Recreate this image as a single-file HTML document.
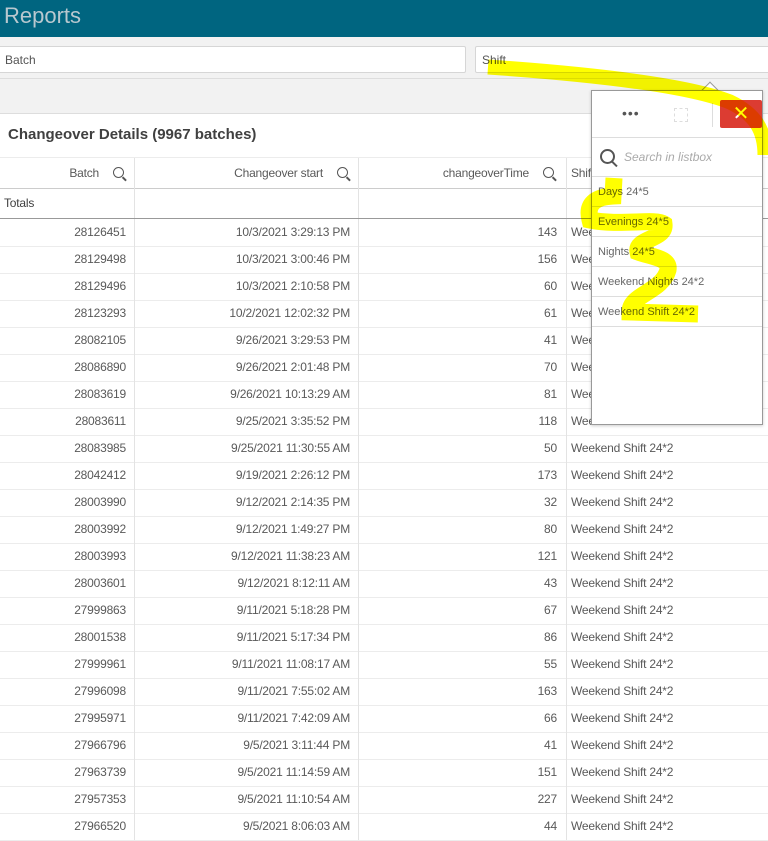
<!DOCTYPE html>
<html><head><style>
body{margin:0;width:768px;height:837px;overflow:hidden;background:#fff;font-family:"Liberation Sans",sans-serif;position:relative;color:#595959}
.a{position:absolute}
.hdr{left:0;top:0;width:768px;height:37px;background:#006580}
.hdr span{position:absolute;left:4px;top:3px;font-size:22px;color:#b8c8cf}
.gray{left:0;top:37px;width:768px;height:76px;background:#f2f2f2;border-bottom:1px solid #ddd}
.box{background:#fff;border:1px solid #d6d6d6;border-radius:2px;height:27px;font-size:12px;line-height:27px;padding-left:6px;box-sizing:border-box;color:#555}
.title{left:8px;top:126px;font-size:15px;font-weight:bold;color:#404040}
.row{position:absolute;left:0;width:768px;height:27px;border-bottom:1px solid #ececec;font-size:12px;line-height:27px;letter-spacing:-0.2px}
.c{position:absolute;top:0;height:100%;border-right:1px solid #e3e3e3;text-align:right;box-sizing:border-box}
.c1{left:0;width:135px;padding-right:8px}
.c2{left:135px;width:224px;padding-right:8px}
.c3{left:359px;width:208px;padding-right:9px}
.c4{left:567px;width:200px;text-align:left;padding-left:4px;border:none}
.mag{display:inline-block;width:9px;height:9px;border:1.5px solid #555;border-radius:50%;position:relative;margin-left:14px;vertical-align:-1px}
.mag:after{content:"";position:absolute;width:5px;height:1.5px;background:#555;left:8px;top:10px;transform:rotate(45deg)}
.pop{left:591px;top:90px;width:170px;height:333px;background:#fff;border:1px solid #999;box-shadow:0 1px 3px rgba(0,0,0,.2)}
.it{position:absolute;left:0;width:170px;height:30px;border-bottom:1px solid #ddd;font-size:11px;line-height:30px;padding-left:6px;box-sizing:border-box;color:#666}
</style></head><body>
<div class="a hdr"><span>Reports</span></div>
<div class="a gray"></div>
<div class="a box" style="left:-2px;top:46px;width:468px">Batch</div>
<div class="a box" style="left:475px;top:46px;width:300px">Shift</div>
<div class="a" style="left:0;top:78px;width:768px;height:1px;background:#ddd"></div>
<div class="a title">Changeover Details (9967 batches)</div>
<div class="row" style="top:157px;height:30px;line-height:30px;border-bottom:1px solid #ccc;border-top:1px solid #ececec"><div class="c c1" style="padding-right:10px">Batch<span class="mag"></span></div><div class="c c2" style="padding-right:10px">Changeover start<span class="mag"></span></div><div class="c c3" style="padding-right:12px">changeoverTime<span class="mag"></span></div><div class="c c4">Shift</div></div>
<div class="row" style="top:188px;height:30px;line-height:30px;border-bottom:1px solid #999"><div class="c c1" style="text-align:left;padding-left:4px;color:#404040">Totals</div><div class="c c2"></div><div class="c c3"></div></div>
<div id="rows"></div>
<script>
var d=[["28126451","10/3/2021 3:29:13 PM",143],["28129498","10/3/2021 3:00:46 PM",156],["28129496","10/3/2021 2:10:58 PM",60],["28123293","10/2/2021 12:02:32 PM",61],["28082105","9/26/2021 3:29:53 PM",41],["28086890","9/26/2021 2:01:48 PM",70],["28083619","9/26/2021 10:13:29 AM",81],["28083611","9/25/2021 3:35:52 PM",118],["28083985","9/25/2021 11:30:55 AM",50],["28042412","9/19/2021 2:26:12 PM",173],["28003990","9/12/2021 2:14:35 PM",32],["28003992","9/12/2021 1:49:27 PM",80],["28003993","9/12/2021 11:38:23 AM",121],["28003601","9/12/2021 8:12:11 AM",43],["27999863","9/11/2021 5:18:28 PM",67],["28001538","9/11/2021 5:17:34 PM",86],["27999961","9/11/2021 11:08:17 AM",55],["27996098","9/11/2021 7:55:02 AM",163],["27995971","9/11/2021 7:42:09 AM",66],["27966796","9/5/2021 3:11:44 PM",41],["27963739","9/5/2021 11:14:59 AM",151],["27957353","9/5/2021 11:10:54 AM",227],["27966520","9/5/2021 8:06:03 AM",44]];
var h="";d.forEach(function(r,i){h+='<div class="row" style="top:'+(219+i*27)+'px"><div class="c c1">'+r[0]+'</div><div class="c c2">'+r[1]+'</div><div class="c c3">'+r[2]+'</div><div class="c c4">Weekend Shift 24*2</div></div>';});
document.getElementById("rows").innerHTML=h;
</script>
<div class="a" style="left:704px;top:84px;width:11px;height:11px;background:#fff;border-left:1px solid #999;border-top:1px solid #999;transform:rotate(45deg);z-index:2"></div>
<div class="a pop" style="z-index:3">
 <div class="a" style="left:30px;top:14px;font-size:14px;color:#555;letter-spacing:1px">•••</div>
 <div class="a" style="left:82px;top:17px;width:12px;height:12px;border:1px dashed #ddd"></div>
 <div class="a" style="left:120px;top:12px;width:1px;height:24px;background:#ddd"></div>
 <div class="a" style="left:128px;top:9px;width:42px;height:28px;background:#dc3c32;border-radius:2px;color:#fff;font-size:20px;line-height:28px;text-align:center">✕</div>
 <div class="a" style="left:0;top:46px;width:170px;height:1px;background:#ddd"></div>
 <div class="a" style="left:8px;top:58px;width:11px;height:11px;border:2px solid #555;border-radius:50%"></div>
 <div class="a" style="left:19px;top:72px;width:7px;height:2px;background:#555;transform:rotate(45deg)"></div>
 <div class="a" style="left:32px;top:59px;font-size:12px;font-style:italic;color:#aaa">Search in listbox</div>
 <div class="it" style="top:55px;height:31px"></div>
 <div class="it" style="top:86px">Days 24*5</div>
 <div class="it" style="top:116px">Evenings 24*5</div>
 <div class="it" style="top:146px">Nights 24*5</div>
 <div class="it" style="top:176px">Weekend Nights 24*2</div>
 <div class="it" style="top:206px">Weekend Shift 24*2</div>
</div>
<svg class="a" style="left:0;top:0;z-index:5;mix-blend-mode:multiply" width="768" height="837">
<path d="M488,67 C560,72 680,82 730,102 C755,114 765,130 765,155" stroke="#ffff00" stroke-width="15" fill="none"/>
<path d="M614,178 L613,196 C595,197 586,204 590,220 C620,226 655,218 664,224 C666,240 635,238 638,252 C652,257 670,258 668,270 C662,292 630,294 630,312 L698,314" stroke="#ffff00" stroke-width="17" fill="none"/>
</svg>
</body></html>
